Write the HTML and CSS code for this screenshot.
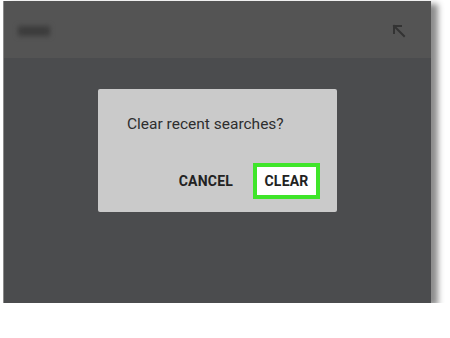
FILE: index.html
```html
<!DOCTYPE html>
<html>
<head>
<meta charset="utf-8">
<link rel="stylesheet" href="styles.css">
</head>
<body>
<div class="screen">
  <div class="topbar">
    <div class="smudge"></div>
    <svg class="arrow" width="16" height="16" viewBox="0 0 16 16"><path d="M3 3 L13 13 M3 3 L3 10 M3 3 L10 3" stroke="#333" stroke-width="2" fill="none" stroke-linecap="square"/></svg>
  </div>
  <div class="content"></div>
  <div class="dialog">
    <div class="title">Clear recent searches?</div>
    <div class="actions">
      <span class="btn cancel">CANCEL</span>
      <span class="btn clear">CLEAR</span>
    </div>
  </div>
</div>
</body>
</html>
```
FILE: styles.css
```css
html, body { margin: 0; padding: 0; background: #fff; }
body { font-family: Roboto, "Liberation Sans", sans-serif; }
.screen {
  position: relative;
  margin: 1px 0 0 3px;
  width: 427px;
  height: 302px;
  border-left: 1px solid #8a8a8a;
  display: flex;
  flex-direction: column;
  background: #4b4c4e;
  box-shadow: 7px 3px 6px rgba(0,0,0,0.45);
}
.topbar {
  height: 57px;
  background: #545454;
  display: flex;
  align-items: center;
  justify-content: space-between;
  padding: 0 24px 0 14px;
  flex: none;
}
.smudge {
  width: 32px;
  height: 10px;
  background: #3c3c3c;
  filter: blur(2.5px);
  margin-top: 2px;
}
.arrow { filter: blur(0.4px); margin-top: 2px; }
.content { flex: 1; }
.dialog {
  position: absolute;
  left: 94px;
  top: 88px;
  width: 239px;
  height: 123px;
  box-sizing: border-box;
  background: #cacaca;
  border-radius: 2px;
  padding: 24px 17px 0 29px;
  display: flex;
  flex-direction: column;
}
.title {
  font-size: 15.5px;
  color: #2e2e2e;
  line-height: 22px;
}
.actions {
  margin-top: 28px;
  display: flex;
  justify-content: flex-end;
  align-items: center;
  gap: 20px;
}
.btn {
  font-size: 14px;
  font-weight: 700;
  color: #222;
  letter-spacing: 0.2px;
}
.clear {
  background: #fff;
  border: 4px solid #3fe52a;
  width: 67px;
  height: 36px;
  box-sizing: border-box;
  display: flex;
  align-items: center;
  justify-content: center;
}
```
